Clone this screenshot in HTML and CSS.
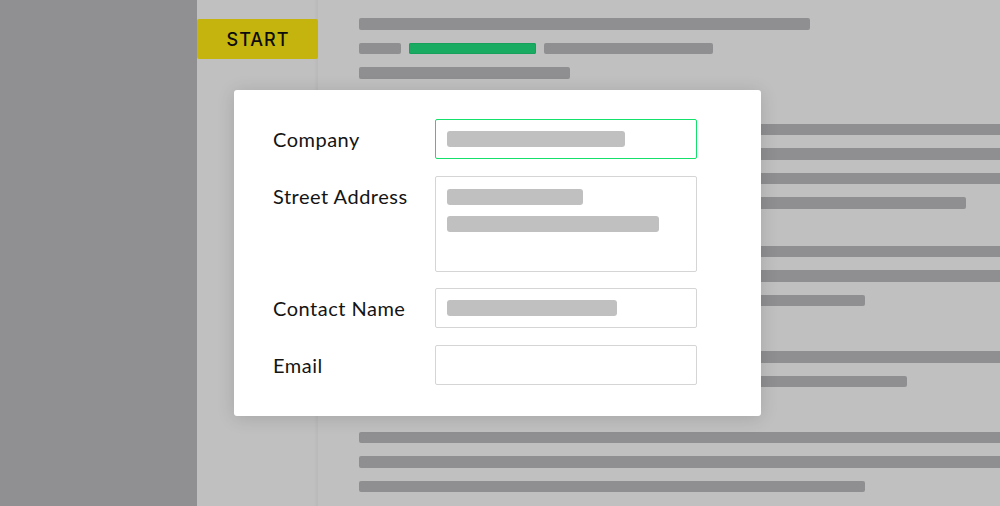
FILE: index.html
```html
<!DOCTYPE html>
<html lang="en">
<head>
<meta charset="utf-8">
<title>Form</title>
<link rel="stylesheet" href="styles.css">
</head>
<body>
<div class="app">
  <aside class="sidebar"></aside>
  <nav class="steps">
    <div class="start">START</div>
  </nav>
  <main class="doc">
    <div class="group g1">
      <div class="row"><span class="bar" style="width:451px"></span></div>
      <div class="row">
        <span class="bar" style="width:42px"></span>
        <span class="bar green" style="width:127px"></span>
        <span class="bar" style="width:169px"></span>
      </div>
      <div class="row"><span class="bar" style="width:211px"></span></div>
    </div>
    <div class="group g2">
      <div class="row"><span class="bar full"></span></div>
      <div class="row"><span class="bar full"></span></div>
      <div class="row"><span class="bar full"></span></div>
      <div class="row"><span class="bar" style="width:607px"></span></div>
    </div>
    <div class="group g3">
      <div class="row"><span class="bar full"></span></div>
      <div class="row"><span class="bar full"></span></div>
      <div class="row"><span class="bar" style="width:506px"></span></div>
    </div>
    <div class="group g4">
      <div class="row"><span class="bar full"></span></div>
      <div class="row"><span class="bar" style="width:548px"></span></div>
    </div>
    <div class="group g5">
      <div class="row"><span class="bar full"></span></div>
      <div class="row"><span class="bar full"></span></div>
      <div class="row"><span class="bar" style="width:506px"></span></div>
    </div>
  </main>
  <section class="modal">
    <div class="field">
      <label class="label">Company</label>
      <div class="input active"><span class="ph" style="width:178px"></span></div>
    </div>
    <div class="field">
      <label class="label">Street Address</label>
      <div class="input area">
        <span class="ph" style="width:136px"></span>
        <span class="ph" style="width:212px"></span>
      </div>
    </div>
    <div class="field">
      <label class="label">Contact Name</label>
      <div class="input"><span class="ph" style="width:170px"></span></div>
    </div>
    <div class="field">
      <label class="label">Email</label>
      <div class="input"></div>
    </div>
  </section>
</div>
</body>
</html>
```
FILE: styles.css
```css
* { box-sizing: border-box; }
html, body { margin: 0; padding: 0; }
body {
  width: 1000px;
  height: 506px;
  overflow: hidden;
  background: #c0c0c0;
  font-family: Lato, "Noto Sans", sans-serif;
}
.app {
  position: relative;
  display: flex;
  height: 506px;
  overflow: hidden;
}
.sidebar {
  width: 197px;
  flex: none;
  background: #909092;
}
.steps {
  width: 121px;
  flex: none;
  background: #c0c0c0;
  padding-top: 19px;
  box-shadow: inset -5px 0 4px -4px rgba(0,0,0,0.06);
}
.start {
  height: 40px;
  background: #c4b40d;
  border-radius: 2px;
  display: flex;
  align-items: center;
  justify-content: center;
  font-family: Inter, "Noto Sans", sans-serif;
  font-weight: 500;
  font-size: 18px;
  letter-spacing: 1px;
  color: #0c0c0c;
  padding-left: 1px;
}
.doc {
  flex: 1;
  padding-left: 41px;
  padding-top: 18px;
  min-width: 0;
}
.group {
  display: flex;
  flex-direction: column;
  gap: 13px;
}
.g2 { margin-top: 45px; }
.g3 { margin-top: 37px; }
.g4 { margin-top: 45px; }
.g5 { margin-top: 44.5px; }
.row {
  display: flex;
  gap: 8px;
  height: 11.5px;
}
.bar {
  display: block;
  height: 11.5px;
  background: #8f8f91;
  border-radius: 2px;
  flex: none;
}
.bar.full { width: 700px; }
.bar.green {
  background: #19ab62;
  box-shadow: inset 0 0 0 1px #16a05b;
}
.modal {
  position: absolute;
  left: 234px;
  top: 90px;
  width: 527px;
  height: 326px;
  background: #fff;
  border-radius: 3px;
  box-shadow: 0 2px 18px rgba(0,0,0,0.14);
  padding: 29px 64px 30px 39px;
  display: flex;
  flex-direction: column;
  gap: 16.5px;
}
.field {
  display: flex;
  align-items: flex-start;
}
.label {
  width: 162px;
  flex: none;
  font-size: 20px;
  letter-spacing: 0.5px;
  color: #141414;
  line-height: 24px;
  padding-top: 8px;
}
.input {
  flex: 1;
  height: 40px;
  border: 1px solid #d5d5d5;
  border-radius: 2px;
  padding: 11px 11px 0;
  display: flex;
  flex-direction: column;
  gap: 11px;
}
.input.active {
  border-color: #14e06c;
  padding-top: 11px;
}
.input.area {
  height: 96px;
  padding-top: 12px;
}
.ph {
  display: block;
  height: 16px;
  background: #c0c0c0;
  border-radius: 3px;
}
```
